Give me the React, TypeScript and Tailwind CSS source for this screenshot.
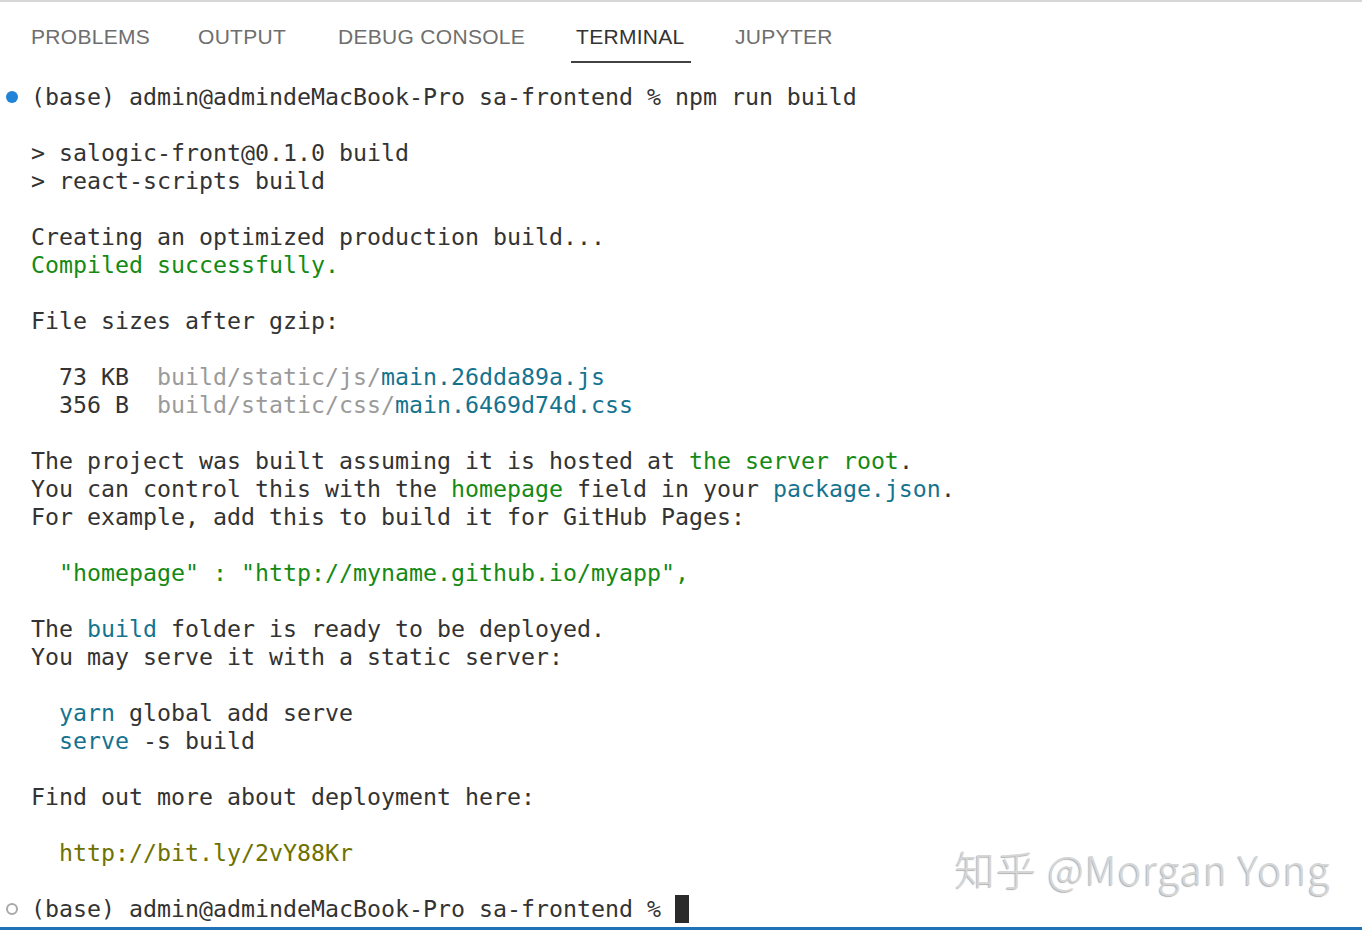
type Seg = { t: string; c?: string };
type Line = { segs: Seg[]; mark?: "run" | "idle"; cursor?: boolean };

const GREEN = "text-[#148a14]";
const TEAL = "text-[#15738f]";
const OLIVE = "text-[#6e7200]";
const GRAY = "text-[#9a9a9a]";

const PROMPT = "(base) admin@admindeMacBook-Pro sa-frontend % ";

const LINES: Line[] = [
  { mark: "run", segs: [{ t: PROMPT + "npm run build" }] },
  { segs: [] },
  { segs: [{ t: "> salogic-front@0.1.0 build" }] },
  { segs: [{ t: "> react-scripts build" }] },
  { segs: [] },
  { segs: [{ t: "Creating an optimized production build..." }] },
  { segs: [{ t: "Compiled successfully.", c: GREEN }] },
  { segs: [] },
  { segs: [{ t: "File sizes after gzip:" }] },
  { segs: [] },
  { segs: [{ t: "  73 KB  " }, { t: "build/static/js/", c: GRAY }, { t: "main.26dda89a.js", c: TEAL }] },
  { segs: [{ t: "  356 B  " }, { t: "build/static/css/", c: GRAY }, { t: "main.6469d74d.css", c: TEAL }] },
  { segs: [] },
  { segs: [{ t: "The project was built assuming it is hosted at " }, { t: "the server root", c: GREEN }, { t: "." }] },
  { segs: [{ t: "You can control this with the " }, { t: "homepage", c: GREEN }, { t: " field in your " }, { t: "package.json", c: TEAL }, { t: "." }] },
  { segs: [{ t: "For example, add this to build it for GitHub Pages:" }] },
  { segs: [] },
  { segs: [{ t: "  " }, { t: "\"homepage\" : \"http://myname.github.io/myapp\",", c: GREEN }] },
  { segs: [] },
  { segs: [{ t: "The " }, { t: "build", c: TEAL }, { t: " folder is ready to be deployed." }] },
  { segs: [{ t: "You may serve it with a static server:" }] },
  { segs: [] },
  { segs: [{ t: "  " }, { t: "yarn", c: TEAL }, { t: " global add serve" }] },
  { segs: [{ t: "  " }, { t: "serve", c: TEAL }, { t: " -s build" }] },
  { segs: [] },
  { segs: [{ t: "Find out more about deployment here:" }] },
  { segs: [] },
  { segs: [{ t: "  " }, { t: "http://bit.ly/2vY88Kr", c: OLIVE }] },
  { segs: [] },
  { mark: "idle", cursor: true, segs: [{ t: PROMPT }] },
];

const TABS: { label: string; w: string }[] = [
  { label: "PROBLEMS", w: "w-[118px]" },
  { label: "OUTPUT", w: "w-[91px]" },
  { label: "DEBUG CONSOLE", w: "w-[189px]" },
  { label: "TERMINAL", w: "w-[110px]" },
  { label: "JUPYTER", w: "w-[97px]" },
];

export default function App() {
  return (
    <div className="relative w-[1362px] h-[930px] overflow-hidden bg-white flex flex-col">
      <div className="h-[2px] bg-[#d6d6d6]" />

      <div className="flex gap-[49px] pl-[31px] pt-[23px]">
        {TABS.map((tab) => (
          <div key={tab.label} className={`flex flex-col ${tab.w}`}>
            <span
              className={`text-[21px] leading-[24px] tracking-[0.3px] whitespace-nowrap font-['Liberation_Sans',Arial,sans-serif] ${
                tab.label === "TERMINAL" ? "text-[#333333]" : "text-[#6e6e6e]"
              }`}
            >
              {tab.label}
            </span>
            <div
              className={`h-[2px] -mx-[5px] mt-[12px] ${tab.label === "TERMINAL" ? "bg-[#424242]" : "bg-transparent"}`}
            />
          </div>
        ))}
      </div>

      <div className="pt-[20px] font-['DejaVu_Sans_Mono',Menlo,monospace] text-[23.25px] text-[#333333]">
        {LINES.map((l, i) => (
          <div key={i} className="flex h-[28px] leading-[28px]">
            <div className="w-[31px] shrink-0 flex items-center">
              {l.mark === "run" && <div className="ml-[6px] w-[12px] h-[12px] rounded-full bg-[#2083d6]" />}
              {l.mark === "idle" && <div className="ml-[6px] w-[12px] h-[12px] rounded-full border-2 border-[#a8a8a8]" />}
            </div>
            <span className="whitespace-pre">
              {l.segs.map((s, j) => (
                <span key={j} className={s.c}>
                  {s.t}
                </span>
              ))}
            </span>
            {l.cursor && <div className="w-[14px] h-[28px] bg-[#2b2b2b] shrink-0" />}
          </div>
        ))}
      </div>

      {/* zhihu watermark */}
      <div className="absolute left-[955px] top-[842px] text-[40px] leading-[52px] font-light tracking-[1.2px] text-[#d6d6d6] font-['Noto_Sans_CJK_SC','Noto_Sans',sans-serif] [text-shadow:-1px_1px_1px_rgba(0,0,0,0.3)] whitespace-pre">
        知乎 @Morgan Yong
      </div>

      <div className="absolute left-0 right-0 bottom-0 h-[3px] bg-[#1f72b5]" />
    </div>
  );
}
